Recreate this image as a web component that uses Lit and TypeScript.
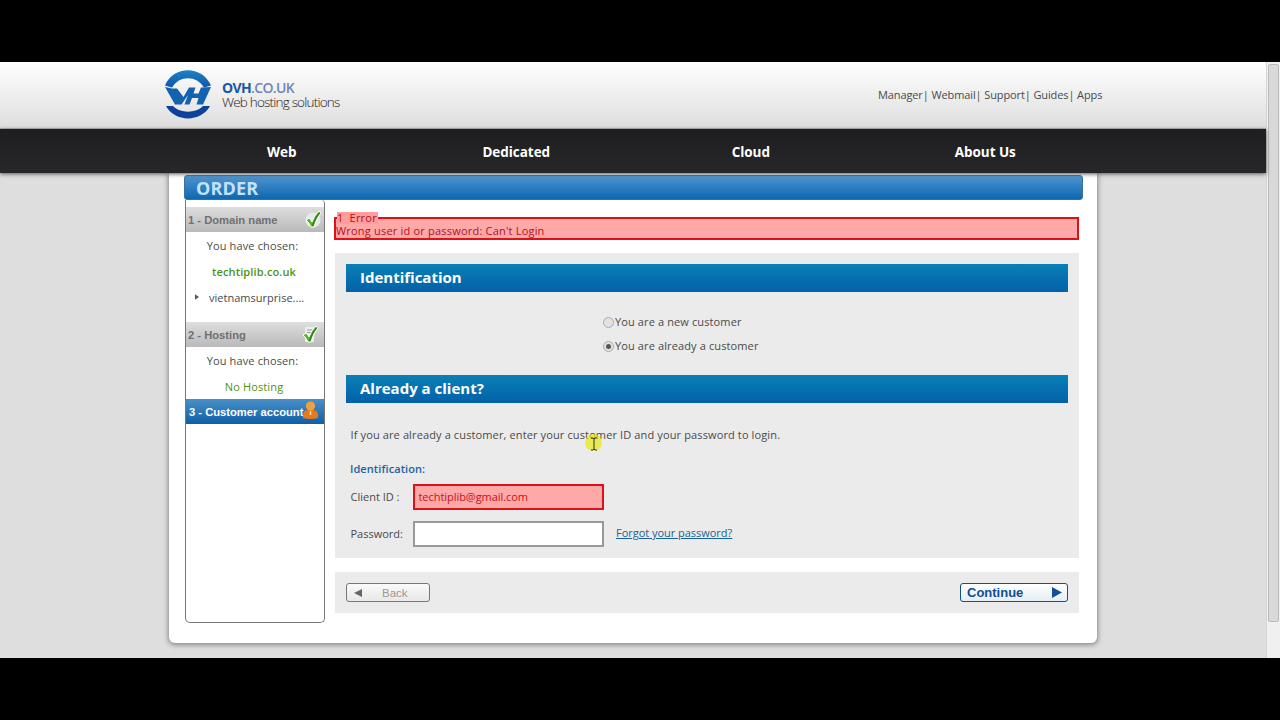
import { LitElement, html, css, svg } from "lit";
import { customElement } from "lit/decorators.js";

const check = svg`<path d="M1 9 L4.500 7 L7 11 Q9 4.500 14 0 L16 1.500 Q11.500 7 9 16 L6 16 Q4 11.500 1 9Z" fill="#5bb02e" stroke="#fff" stroke-width="1"/><path d="M7.500 15 Q10 7 14.500 2" stroke="#2e7d1c" stroke-width="1.200" fill="none"/>`;

@customElement("app-root")
export class AppRoot extends LitElement {
  static styles = css`
    :host { display: block; width: 1280px; height: 720px; background: #000; padding: 62px 0; box-sizing: border-box; overflow: hidden;
      font-family: "Open Sans", sans-serif; font-size: 11px; color: #4a4a4a; line-height: 14px; }
    * { box-sizing: border-box; }
    .view { display: flex; height: 596px; position: relative; }
    .page { width: 1266px; background: #dedede; display: flex; flex-direction: column; }
    .scroll { width: 14px; background: #f0f0f0; border-left: 1px solid #d5d5d5; padding: 2px 1px 0; }
    .thumb { height: 558px; background: #d9d9d9; border: 1px solid #bbb; border-radius: 2px; }
    .head { height: 67px; background: linear-gradient(#fff, #dedede); border-bottom: 1px solid #b5b5b5; display: flex; padding-left: 163px; flex: none; }
    .logo { width: 51px; height: 52px; margin-top: 7px; }
    .brand { margin: 18px 0 0 8px; width: 656px; }
    .name { font-size: 14px; line-height: 16px; font-weight: 600; color: #6f86b7; letter-spacing: -0.64px; }
    .name b { color: #1658a4; font-weight: 700; }
    .tag { font-size: 13.500px; line-height: 13px; font-weight: 300; color: #222; letter-spacing: -0.8px; }
    .links { margin-top: 26px; white-space: pre; letter-spacing: -.11px; }
    .nav { height: 44px; flex: none; background: linear-gradient(#1e1e21, #27272a); box-shadow: 0 1px 4px #555; display: grid; grid-template-columns: repeat(4, 234.500px); justify-content: center; padding-left: 1px; position: relative; z-index: 1; }
    .nav span { color: #fff; font-weight: 700; font-size: 13.500px; line-height: 46px; text-align: center; letter-spacing: -.05px; }
    .wrap { width: 928px; height: 470px; margin-left: 169px; background: #fff; border-radius: 0 0 6px 6px; box-shadow: 0 1px 5px 1px #888; padding: 2px 14px 0 15px; }
    .order { height: 25px; border-radius: 3px; border: 1px solid #3c6f9f; background: linear-gradient(#4f94cf, #0d68b0); color: #c3e2fb; font-weight: 700; font-size: 18px; line-height: 24px; padding-left: 11px; letter-spacing: .15px; }
    .cols { display: flex; padding-left: 1px; }
    .side { width: 140px; height: 423px; border: 1px solid #777; border-top: 0; border-radius: 0 4px 5px 5px; padding-top: 7px; text-align: center; }
    .step { height: 25px; background: linear-gradient(#dedede, #b9b9b9); color: #707070; font: bold 11.200px/26px "Liberation Sans", Arial, sans-serif; display: flex; justify-content: space-between; padding: 0 2px; white-space: nowrap; }
    .step svg { width: 17px; height: 18px; margin: 4px 0 0; flex: none; }
    .step.doc svg { margin-right: 3px; }
    .step.on { background: linear-gradient(#4a90c8, #0d5fa5); color: #fff; padding-left: 3px; }
    .step.on svg { margin: 1px 3px 0 -3px; height: 20px; }
    .row { height: 26px; line-height: 27px; letter-spacing: .13px; padding-right: 5px; }
    .row.green { color: #4c9414; padding-right: 2px; letter-spacing: .14px; }
    .row.dom { display: flex; align-items: center; padding-left: 9px; letter-spacing: .02px; }
    .row.dom svg { width: 4px; height: 6px; margin-right: 10px; }
    .strong { font-weight: 600; }
    .gap { height: 12px; }
    .main { width: 745px; margin-left: 9px; }
    fieldset { margin: 12px 0 0; padding: 0 0 1px; border: 2px solid #e01018; background: #ffa8a8; color: #b3101b; height: 28px; letter-spacing: .2px; }
    legend { padding: 0; margin-left: 1px; background: #ff9c9c; line-height: 12px; height: 12px; width: 41px; white-space: pre; }
    .msg { line-height: 14px; }
    .panel { background: #ebebeb; margin: 13px 0 0 1px; height: 305px; padding: 11px 11px 0; }
    h2 { margin: 0; height: 28px; background: linear-gradient(#0a80b6, #0261a8); color: #fff; font-size: 15px; line-height: 26px; padding-left: 14px; font-weight: 700; }
    .radios { height: 83px; padding: 18px 0 0 256px; }
    .radio { height: 24px; display: flex; align-items: center; letter-spacing: .12px; }
    .radio i { width: 11px; height: 11px; border: 1px solid #aaa; border-radius: 50%; background: #e2e2e2; margin: 0 1.500px 0 .5px; display: grid; place-items: center; }
    .radio i.on::after { content: ""; width: 5px; height: 5px; border-radius: 50%; background: #555; }
    .intro { margin: 25px 0 0 4.500px; letter-spacing: .125px; white-space: nowrap; }
    .sub { margin: 20px 0 8px 4px; color: #1b64a2; font-weight: 600; letter-spacing: .08px; }
    .field { display: flex; height: 26px; margin: 0 0 11px 4.500px; align-items: center; }
    .field label { width: 62.500px; }
    .box { width: 191px; height: 26px; border: 2px solid #999; background: #fff; padding-left: 3.500px; line-height: 22px; letter-spacing: -.05px; }
    .box.bad { border-color: #e01018; background: #ffa8a8; color: #c5101c; }
    .field a { color: #17639a; text-decoration: underline; margin: -2px 0 0 12px; letter-spacing: -.03px; }
    .foot { background: #ebebeb; margin: 14px 0 0 1px; height: 41px; padding: 11px; display: flex; justify-content: space-between; }
    .btn { height: 19px; border-radius: 3px; display: flex; align-items: center; font-family: "Liberation Sans", Arial, sans-serif; background: linear-gradient(#fafafa, #e8e8e8); }
    .back { width: 84px; border: 1px solid #777; color: #999; font-size: 11.500px; padding-left: 7px; }
    .back svg { width: 8px; height: 8px; margin-right: 20px; }
    .next { width: 108px; border: 1px solid #174f8c; color: #124c92; font-size: 13px; font-weight: 700; justify-content: space-between; padding: 0 5px 0 6px; background: linear-gradient(#fff, #e6edf3); }
    .next svg { width: 11px; height: 11px; }
    .cursor { position: absolute; left: 585px; top: 372px; width: 17px; height: 18px; }
  `;

  render() {
    return html`<div class="view">
      <div class="page">
        <div class="head">
          <svg class="logo" viewBox="0 0 51 52">
            <defs><linearGradient id="g" x2="0" y2="1"><stop stop-color="#1a83c5"/><stop offset="1" stop-color="#0f56ab"/></linearGradient></defs>
            <path fill="url(#g)" d="M2 16.500 C10 -4 39.500 -4 48 16.500 L41 18.500 C34 6 16 6 9 18.500Z"/>
            <path fill="#0d429c" d="M3 37 H10 C17 44.500 33 44.500 40 37 H47 C38 53.500 12 53.500 3 37Z"/>
            <path fill="#1262b0" d="M2 18 L9 19.500 H14 L20.500 28 L26 18.500 H32.500 L30.500 24.500 H35.500 L38 18.500 L48 18 L40 35.500 H33.500 L35.500 29 H29 L26.500 35.500 H21.500 L25 26 L18.500 35.500 H12Z"/>
          </svg>
          <div class="brand"><div class="name"><b>OVH</b>.CO.UK</div><div class="tag">Web hosting solutions</div></div>
          <div class="links">Manager| Webmail| Support| Guides| Apps</div>
        </div>
        <div class="nav"><span>Web</span><span>Dedicated</span><span>Cloud</span><span>About Us</span></div>
        <div class="wrap">
          <div class="order">ORDER</div>
          <div class="cols">
            <div class="side">
              <div class="step">1 - Domain name<svg viewBox="0 0 17 18"><circle cx="8" cy="9" r="7.500" fill="#e9e9e9"/>${check}</svg></div>
              <div class="row">You have chosen:</div>
              <div class="row green strong">techtiplib.co.uk</div>
              <div class="row dom"><svg viewBox="0 0 5 7"><path d="M0 0 L5 3.500 L0 7Z" fill="#555"/></svg>vietnamsurprise....</div>
              <div class="gap"></div>
              <div class="step doc">2 - Hosting<svg viewBox="0 0 17 18"><path d="M3 1 H12 V16 H3Z" fill="#eee"/><path d="M5 4H10M5 6.500H9" stroke="#999"/>${check}</svg></div>
              <div class="row">You have chosen:</div>
              <div class="row green">No Hosting</div>
              <div class="step on">3 - Customer account<svg viewBox="0 0 17 20"><path d="M1 18 Q0 10 6 10 H11 Q17 10 16 18 Q8 20 1 18Z" fill="#e67a1a"/><circle cx="8.500" cy="6" r="4.600" fill="#efa044"/><path d="M8.500 11 V15" stroke="#fbd9a8" stroke-width="1.500"/></svg></div>
            </div>
            <div class="main">
              <fieldset><legend>1  Error</legend><div class="msg">Wrong user id or password: Can't Login</div></fieldset>
              <div class="panel">
                <h2>Identification</h2>
                <div class="radios"><div class="radio"><i></i>You are a new customer</div><div class="radio"><i class="on"></i>You are already a customer</div></div>
                <h2>Already a client?</h2>
                <div class="intro">If you are already a customer, enter your customer ID and your password to login.</div>
                <div class="sub">Identification:</div>
                <div class="field"><label>Client ID :</label><div class="box bad">techtiplib@gmail.com</div></div>
                <div class="field"><label>Password:</label><div class="box"></div><a>Forgot your password?</a></div>
              </div>
              <div class="foot">
                <div class="btn back"><svg viewBox="0 0 8 8"><path d="M8 0 V8 L0 4Z" fill="#666"/></svg>Back</div>
                <div class="btn next">Continue<svg viewBox="0 0 11 11"><path d="M1 0 L11 5.500 L1 11Z" fill="#124f9c"/></svg></div>
              </div>
            </div>
          </div>
        </div>
      </div>
      <div class="scroll"><div class="thumb"></div></div>
      <svg class="cursor" viewBox="0 0 17 18"><circle cx="8.500" cy="8.500" r="8.500" fill="#e8e800" opacity=".65"/><path d="M6 4 H8 L9 5 L10 4 H12 M9 5 V15 M6 16 H8 L9 15 L10 16 H12" stroke="#333" fill="none"/></svg>
    </div>`;
  }
}
